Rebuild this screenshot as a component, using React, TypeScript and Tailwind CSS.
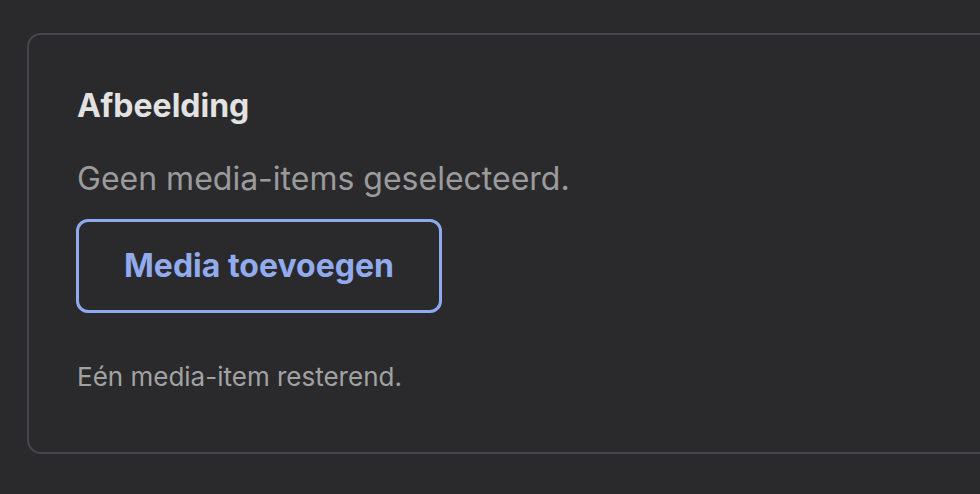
import React from 'react';

export default function App() {
  return (
    <div className="w-[980px] h-[494px] overflow-hidden bg-[#2a2a2c] pt-[33px] pl-[27px] font-['Inter',sans-serif]">
      <div className="w-[1000px] h-[421px] rounded-[14px] border-2 border-[#47474b] pl-[47px] pt-[51px]">
        <h2 className="pl-[1px] text-[32px] leading-[40px] font-bold text-[#e2e2e2]">Afbeelding</h2>
        <p className="pl-[1px] mt-[33px] text-[32px] leading-[40px] text-[#9b9b9d]">Geen media-items geselecteerd.</p>
        <button className="mt-[20px] h-[94px] w-[366px] rounded-[12px] border-[3px] border-[#8eaaee] text-[32px] font-bold text-[#92abee]">
          Media toevoegen
        </button>
        <p className="pl-[1px] mt-[49px] text-[26px] leading-[30px] text-[#a2a2a4]">Eén media-item resterend.</p>
      </div>
    </div>
  );
}
